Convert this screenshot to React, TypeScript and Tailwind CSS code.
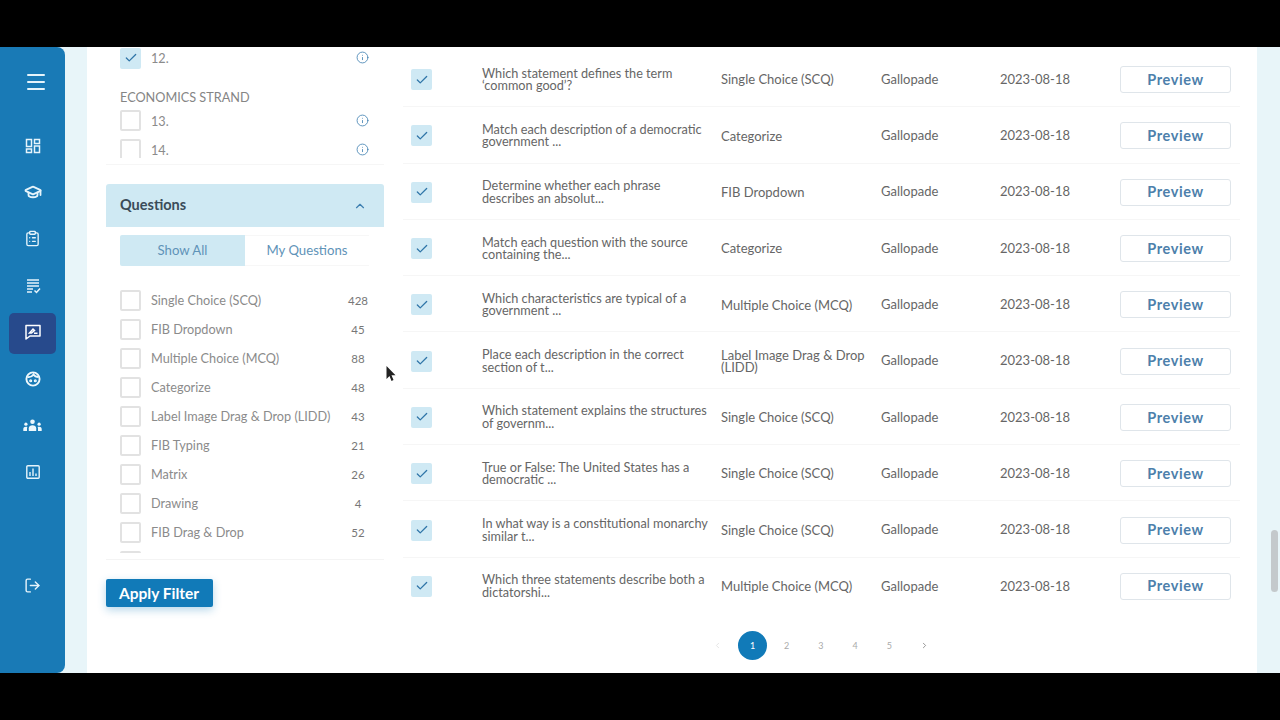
import React from "react";
import { Menu, GraduationCap, ClipboardList, LogOut, Info, ChevronUp, Check, ChevronLeft, ChevronRight } from "lucide-react";

const rows: [string, string, string][] = [
  ["Which statement defines the term", "‘common good’?", "Single Choice (SCQ)"],
  ["Match each description of a democratic", "government ...", "Categorize"],
  ["Determine whether each phrase", "describes an absolut...", "FIB Dropdown"],
  ["Match each question with the source", "containing the...", "Categorize"],
  ["Which characteristics are typical of a", "government ...", "Multiple Choice (MCQ)"],
  ["Place each description in the correct", "section of t...", "Label Image Drag & Drop (LIDD)"],
  ["Which statement explains the structures", "of governm...", "Single Choice (SCQ)"],
  ["True or False: The United States has a", "democratic ...", "Single Choice (SCQ)"],
  ["In what way is a constitutional monarchy", "similar t...", "Single Choice (SCQ)"],
  ["Which three statements describe both a", "dictatorshi...", "Multiple Choice (MCQ)"],
];

const filters: [string, string][] = [
  ["Single Choice (SCQ)", "428"],
  ["FIB Dropdown", "45"],
  ["Multiple Choice (MCQ)", "88"],
  ["Categorize", "48"],
  ["Label Image Drag & Drop (LIDD)", "43"],
  ["FIB Typing", "21"],
  ["Matrix", "26"],
  ["Drawing", "4"],
  ["FIB Drag & Drop", "52"],
];

function Box() {
  return <div className="w-[21px] h-[21px] shrink-0 rounded-[2px] border-2 border-[#e2e2e2] bg-white" />;
}

function Checked() {
  return (
    <div className="w-[21px] h-[21px] shrink-0 rounded-[2px] bg-[#cfe9f4] flex items-center justify-center">
      <Check size={14} strokeWidth={2.2} className="text-[#2f75a8]" />
    </div>
  );
}

function DashIcon() {
  return (
    <svg width="16" height="16" viewBox="0 0 16 16" fill="none" stroke="#e6f4fb" strokeWidth="1.5">
      <rect x="1.5" y="1.5" width="5" height="7" />
      <rect x="9.5" y="1.5" width="5" height="4" />
      <rect x="1.5" y="11" width="5" height="3.5" />
      <rect x="9.5" y="8" width="5" height="6.5" />
    </svg>
  );
}

function ListCheckIcon() {
  return (
    <svg width="16" height="16" viewBox="0 0 16 16" fill="none" stroke="#e6f4fb" strokeWidth="1.5">
      <path d="M2 2h12M2 5h12M2 8h12M2 11h6M2 14h5" />
      <path d="M9.5 12.5l2 2 3.5-4" />
    </svg>
  );
}

function BoardIcon() {
  return (
    <svg width="16" height="16" viewBox="0 0 16 16" fill="none" stroke="#ffffff" strokeWidth="1.5">
      <path d="M1 1.5h14v10.5H5l-4 3z" strokeLinejoin="round" />
      <path d="M4.5 9l3.5-4 1.5 1.5-3 2.5zM9 9.2h3.5" />
    </svg>
  );
}

function FaceIcon() {
  return (
    <svg width="16" height="16" viewBox="0 0 16 16" fill="none" stroke="#eef8fc" strokeWidth="1.9">
      <circle cx="8" cy="8" r="6.6" />
      <path d="M2.5 6c3 .6 4.5-.4 6-2.5 1 1.6 2.5 2.5 5 2.5" />
      <circle cx="5.7" cy="9.8" r=".6" fill="#eef8fc" />
      <circle cx="10.3" cy="9.8" r=".6" fill="#eef8fc" />
    </svg>
  );
}

function GroupIcon() {
  return (
    <svg width="19" height="13" viewBox="0 0 19 13" fill="#eef8fc">
      <circle cx="9.5" cy="2.8" r="2.3" />
      <path d="M5.8 12V9.2c0-2 1.6-3 3.7-3s3.7 1 3.7 3V12z" />
      <circle cx="2.9" cy="5.2" r="1.6" />
      <path d="M.3 12v-2c0-1.5 1.1-2.3 2.6-2.3.6 0 1 .1 1.5.3-.3.5-.4 1-.4 1.4V12z" />
      <circle cx="16.1" cy="5.2" r="1.6" />
      <path d="M18.7 12v-2c0-1.5-1.1-2.3-2.6-2.3-.6 0-1 .1-1.5.3.3.5.4 1 .4 1.4V12z" />
    </svg>
  );
}

function ChartIcon() {
  return (
    <svg width="14" height="14" viewBox="0 0 14 14" fill="none" stroke="#e6f4fb" strokeWidth="1.4">
      <rect x=".8" y=".8" width="12.4" height="12.4" rx="1" />
      <path d="M4 11V7M7 11V3.5M10 11V8.5" />
    </svg>
  );
}

function Sidebar() {
  const item = "w-[47px] h-[43px] flex items-center justify-center rounded-[5px]";
  return (
    <div className="w-[65px] shrink-0 bg-[#197ab6] rounded-r-[8px] flex flex-col items-center">
      <div className="h-[70px] pl-[6px] flex items-center justify-center">
        <Menu size={24} className="text-[#e6f4fb]" strokeWidth={2} />
      </div>
      <div className="flex flex-col items-center gap-[3.7px] mt-[7px]">
        <div className={item}><DashIcon /></div>
        <div className={item}><GraduationCap size={18} className="text-[#e6f4fb]" strokeWidth={2.4} /></div>
        <div className={item}><ClipboardList size={17} className="text-[#e6f4fb]" strokeWidth={1.9} /></div>
        <div className={item}><ListCheckIcon /></div>
        <div className="w-[47px] h-[41px] mt-[2px] pb-[2px] flex items-center justify-center rounded-[5px] bg-[#274a8c]"><BoardIcon /></div>
        <div className={item}><FaceIcon /></div>
        <div className={item}><GroupIcon /></div>
        <div className={item}><ChartIcon /></div>
      </div>
      <div className="mt-[83px]">
        <LogOut size={17} className="text-[#e6f4fb]" strokeWidth={2} />
      </div>
    </div>
  );
}

function FilterPanel() {
  return (
    <div className="w-[278px] shrink-0 ml-[19px] flex flex-col text-[#8b8b8b] text-[12.7px]">
      <div className="h-[118px] shrink-0 border-b border-[#f6f6f6] pl-[14px] pr-[15px]">
        <div className="h-[111px] overflow-hidden">
          <div className="h-[34px] flex items-center -mt-[6px] gap-[10px]">
            <Checked />
            <span className="mt-[1px]">12.</span>
            <Info size={13} strokeWidth={1.5} className="ml-auto -mt-[2px] text-[#3d7fb0]" />
          </div>
          <div className="h-[18px] mt-[14px] flex items-center text-[#858585]">ECONOMICS STRAND</div>
          <div className="h-[29px] -mt-[1px] flex items-center gap-[10px]">
            <Box />
            <span className="mt-[2px]">13.</span>
            <Info size={13} strokeWidth={1.5} className="ml-auto text-[#3d7fb0]" />
          </div>
          <div className="h-[29px] flex items-center gap-[10px]">
            <Box />
            <span className="mt-[2px]">14.</span>
            <Info size={13} strokeWidth={1.5} className="ml-auto text-[#3d7fb0]" />
          </div>
        </div>
      </div>

      <div className="mt-[19px] h-[43px] shrink-0 bg-[#cfe9f3] rounded-t-[3px] flex items-center justify-between pl-[14px] pr-[17px]">
        <span className="text-[14.5px] -mt-[1px] font-bold text-[#3a4c59]">Questions</span>
        <ChevronUp size={14} strokeWidth={2} className="text-[#3d7fb0]" />
      </div>

      <div className="h-[333px] shrink-0 border-b border-[#f4f4f4]">
        <div className="mt-[8px] mx-[14px] flex h-[31px] text-[13.2px] text-[#5f93b8]">
          <div className="w-[125px] bg-[#cfe9f3] rounded-l-[2px] flex items-center justify-center">Show All</div>
          <div className="w-[124px] border-y border-[#f7f7f7] flex items-center justify-center">My Questions</div>
        </div>
        <div className="mt-[24px] ml-[14px] mr-[16px] h-[263px] overflow-hidden flex flex-col gap-[8px]">
          {filters.map(([n, c]) => (
            <div key={n} className="h-[21px] shrink-0 flex items-center gap-[10px]">
              <Box />
              <span className="flex-1 mt-[1px]">{n}</span>
              <span className="w-[20px] text-center text-[11.5px] text-[#777]">{c}</span>
            </div>
          ))}
          <Box />
        </div>
      </div>

      <button className="mt-[19px] w-[107px] h-[28px] shrink-0 pt-[1px] pr-[1px] bg-[#117ab8] rounded-[2px] text-white text-[15.5px] font-bold shadow-[0_3px_8px_rgba(17,122,184,0.3)]">
        Apply Filter
      </button>
    </div>
  );
}

function Table() {
  return (
    <div className="w-[837px] shrink-0 ml-[19px] flex flex-col pt-[4px] text-[13px] text-[#666]">
      {rows.map(([a, b, type], i) => (
        <div
          key={i}
          className={
            i < rows.length - 1
              ? "h-[56.3px] shrink-0 pt-[2px] flex items-center border-b border-[#f6f6f6]"
              : "h-[56.3px] shrink-0 pt-[2px] flex items-center border-b border-transparent"
          }
        >
          <div className="w-[79px] pl-[8px] shrink-0"><Checked /></div>
          <div className="w-[239px] shrink-0 text-[12.7px] leading-[12.5px] whitespace-nowrap -mt-[1px]">
            <div>{a}</div>
            <div>{b}</div>
          </div>
          <div className="w-[160px] shrink-0 leading-[12.5px] pr-[10px]">{type}</div>
          <div className="w-[119px] shrink-0">Gallopade</div>
          <div className="w-[120px] shrink-0">2023-08-18</div>
          <button className="w-[111px] h-[27px] rounded-[3px] border border-[#dfe5ea] text-[#4d80ab] text-[14.5px] font-bold tracking-[0.6px]">
            Preview
          </button>
        </div>
      ))}
      <div className="mt-[17px] flex items-center text-[9px] text-[#aaa] pl-[310px]">
        <ChevronLeft size={9} className="text-[#ddd] mr-[16px]" />
        <div className="w-[29px] h-[29px] rounded-full bg-[#117ab8] text-white flex items-center justify-center">1</div>
        <span className="ml-[17px]">2</span>
        <span className="ml-[29px]">3</span>
        <span className="ml-[29px]">4</span>
        <span className="ml-[29px]">5</span>
        <ChevronRight size={9} className="ml-[28px] text-[#777]" />
      </div>
    </div>
  );
}

export default function App() {
  return (
    <div className="w-[1280px] h-[720px] bg-black flex flex-col overflow-hidden relative font-['Lato',sans-serif]">
      <div className="h-[47px] shrink-0" />
      <div className="h-[626px] flex bg-[#e8f5f9]">
        <Sidebar />
        <div className="w-[22px] shrink-0" />
        <div className="w-[1170px] shrink-0 bg-white flex">
          <FilterPanel />
          <Table />
        </div>
        <div className="w-[23px] shrink-0 relative">
          <div className="absolute left-[14px] top-[483px] w-[7px] h-[62px] rounded bg-[#c4c9cc]" />
        </div>
      </div>
      <div className="h-[47px] shrink-0" />
      <svg className="absolute left-[385px] top-[365px]" width="12" height="18" viewBox="0 0 12 18">
        <path d="M1.5 1v13l3-3 2 5 2-1-2-4.8h4z" fill="#222" />
      </svg>
    </div>
  );
}
